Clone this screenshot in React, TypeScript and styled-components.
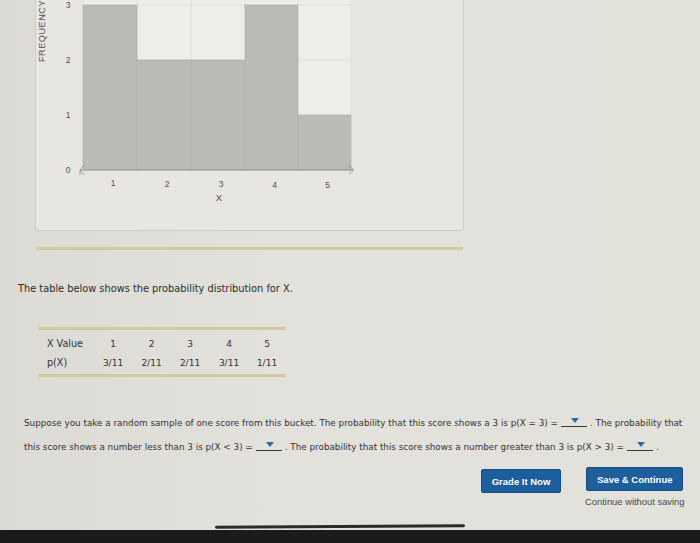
import React, {FC} from 'react';
import styled, {createGlobalStyle} from 'styled-components';

const GlobalStyle = createGlobalStyle`
	html, body {
		margin: 0;
		padding: 0;
		background: #e0ded9;
	}
`;

const Page = styled.div`
	width: 700px;
	height: 543px;
	overflow: hidden;
	display: flex;
	flex-direction: column;
	background: linear-gradient(90deg, #dcdad5 0%, #e3e1dc 40%, #e2e1da 100%);
	font-family: 'DejaVu Sans', Verdana, sans-serif;
	color: #2e2e2e;
`;

const ChartCard = styled.div`
	margin: -60px 0 0 35px;
	width: 429px;
	height: 291px;
	box-sizing: border-box;
	border: 1px solid #cfcdc8;
	border-radius: 3px;
	background: #e8e6e1;
`;

const Rule = styled.div<{width: number; left: number}>`
	margin-left: ${({left}) => left}px;
	width: ${({width}) => width}px;
	height: 3px;
	background: #d2cb9f;
`;

const Intro = styled.p`
	margin: 33px 0 0 18px;
	font-size: 9.8px;
	line-height: 12px;
	color: #2c2c2c;
`;

const TableBlock = styled.div`
	margin: 32px 0 0 38px;
	width: 247px;
`;

const TableRows = styled.div`
	display: grid;
	grid-template-columns: 56px 38px 39px 38px 40px 36px;
	grid-auto-rows: 19px;
	align-items: center;
	padding: 4px 0 2px;
	color: #333;
`;

const Cell = styled.span<{first?: boolean}>`
	text-align: ${({first}) => (first ? 'left' : 'center')};
	padding-left: ${({first}) => (first ? '9px' : '0')};
	font-size: ${({first}) => (first ? '9.6px' : '9px')};
`;

const Question = styled.div`
	margin: 34px 0 0 24px;
	font-size: 8.8px;
	line-height: 24px;
	color: #333;
	white-space: nowrap;
`;

const Blank = styled.span`
	display: inline-block;
	width: 26px;
	height: 9px;
	margin: 0 3px;
	border-bottom: 1px solid #3a3a3a;
	position: relative;
	vertical-align: -1px;

	&::after {
		content: '';
		position: absolute;
		left: 10px;
		top: 1px;
		border-left: 4px solid transparent;
		border-right: 4px solid transparent;
		border-top: 5px solid #2f6aa6;
	}
`;

const Actions = styled.div`
	margin: 8px 0 0 481px;
	display: flex;
	gap: 24px;
	align-items: flex-start;
`;

const ButtonColumn = styled.div`
	display: flex;
	flex-direction: column;
	align-items: center;
	gap: 5px;
`;

const Button = styled.button<{width: number; drop?: number}>`
	width: ${({width}) => width}px;
	height: 24px;
	margin-top: ${({drop}) => drop ?? 0}px;
	padding: 0;
	border: 1px solid #0f4f86;
	border-radius: 2px;
	background: #1c5f9c;
	color: #fff;
	font-family: 'Liberation Sans', Arial, sans-serif;
	font-weight: bold;
	font-size: 9.5px;
	cursor: pointer;
`;

const SkipLink = styled.span`
	font-family: 'Liberation Sans', Arial, sans-serif;
	font-size: 9.4px;
	line-height: 11px;
	color: #4a4a4a;
`;

const ScreenEdge = styled.div`
	margin: 18px 0 0 215px;
	width: 250px;
	height: 3px;
	border-radius: 2px;
	background: #2b2a28;
	transform: rotate(-0.4deg);
`;

const Bezel = styled.div`
	margin-top: auto;
	height: 13px;
	background: #1b1b1b;
`;

const freqs = [3, 2, 2, 3, 1];
const colX = [83, 137, 191, 245, 298, 351];
const unit = 55;
const baseY = 170;
const axisFont = 'Liberation Sans, Arial, sans-serif';

const HistogramChart: FC = () => (
	<svg width="427" height="289" viewBox="36 -59 427 289">
		{/* plot background */}
		<rect x={83} y={-50} width={268} height={220} fill="#eeede9" />
		{[0, 1, 2, 3, 4].map((i) => (
			<line key={`h${i}`} x1={83} x2={351} y1={baseY - i * unit} y2={baseY - i * unit} stroke="#dcdad5" strokeWidth={0.8} />
		))}
		{colX.map((x) => (
			<line key={`v${x}`} x1={x} x2={x} y1={-50} y2={baseY} stroke="#dcdad5" strokeWidth={0.8} />
		))}
		{/* bars */}
		{freqs.map((f, i) => (
			<rect
				key={i}
				x={colX[i]}
				y={baseY - f * unit}
				width={colX[i + 1] - colX[i]}
				height={f * unit}
				fill="#bcbab5"
				stroke="#b1afaa"
				strokeWidth={0.6}
			/>
		))}
		{/* axis arrows */}
		<line x1={80} x2={353} y1={baseY} y2={baseY} stroke="#8e8c88" strokeWidth={0.8} />
		<path d="M84 165 L80 170 L84 175 M80 170 L80 175" stroke="#8e8c88" strokeWidth={0.8} fill="none" />
		<path d="M349 166 L354 170 L349 174" stroke="#8e8c88" strokeWidth={0.8} fill="none" />
		{/* y ticks */}
		{[0, 1, 2, 3].map((v) => (
			<text key={`y${v}`} x={68} y={baseY - v * unit + 3} fontSize={8.5} fill="#505050" textAnchor="middle" fontFamily={axisFont}>
				{v}
			</text>
		))}
		<text x={45} y={31} fontSize={9.2} fill="#555" textAnchor="middle" letterSpacing={0.5} transform="rotate(-90 45 31)" fontFamily={axisFont}>
			FREQUENCY
		</text>
		{/* x ticks */}
		{[1, 2, 3, 4, 5].map((v, i) => (
			<text key={`x${v}`} x={(colX[i] + colX[i + 1]) / 2 + 3} y={186 + i * 0.6} fontSize={8.5} fill="#505050" textAnchor="middle" fontFamily={axisFont}>
				{v}
			</text>
		))}
		<text x={219} y={201} fontSize={9.5} fill="#505050" textAnchor="middle" fontFamily={axisFont}>
			X
		</text>
	</svg>
);

const xValues = ['1', '2', '3', '4', '5'];
const probs = ['3/11', '2/11', '2/11', '3/11', '1/11'];

export default function App() {
	return (
		<>
			<GlobalStyle />
			<Page>
				<ChartCard>
					<HistogramChart />
				</ChartCard>
				<Rule left={36} width={427} style={{marginTop: 16}} />
				<Intro>The table below shows the probability distribution for X.</Intro>
				<TableBlock>
					<Rule left={0} width={247} />
					<TableRows>
						<Cell first>X Value</Cell>
						{xValues.map((v) => (
							<Cell key={v}>{v}</Cell>
						))}
						<Cell first>p(X)</Cell>
						{probs.map((p, i) => (
							<Cell key={i}>{p}</Cell>
						))}
					</TableRows>
					<Rule left={0} width={247} />
				</TableBlock>
				<Question>
					<div>
						Suppose you take a random sample of one score from this bucket. The probability that this score shows a 3 is p(X = 3) =
						<Blank />. The probability that
					</div>
					<div>
						this score shows a number less than 3 is p(X &lt; 3) =
						<Blank />. The probability that this score shows a number greater than 3 is p(X &gt; 3) =
						<Blank />.
					</div>
				</Question>
				<Actions>
					<Button width={80} drop={2}>
						Grade It Now
					</Button>
					<ButtonColumn>
						<Button width={97}>Save &amp; Continue</Button>
						<SkipLink>Continue without saving</SkipLink>
					</ButtonColumn>
				</Actions>
				<ScreenEdge />
				<Bezel />
			</Page>
		</>
	);
}
